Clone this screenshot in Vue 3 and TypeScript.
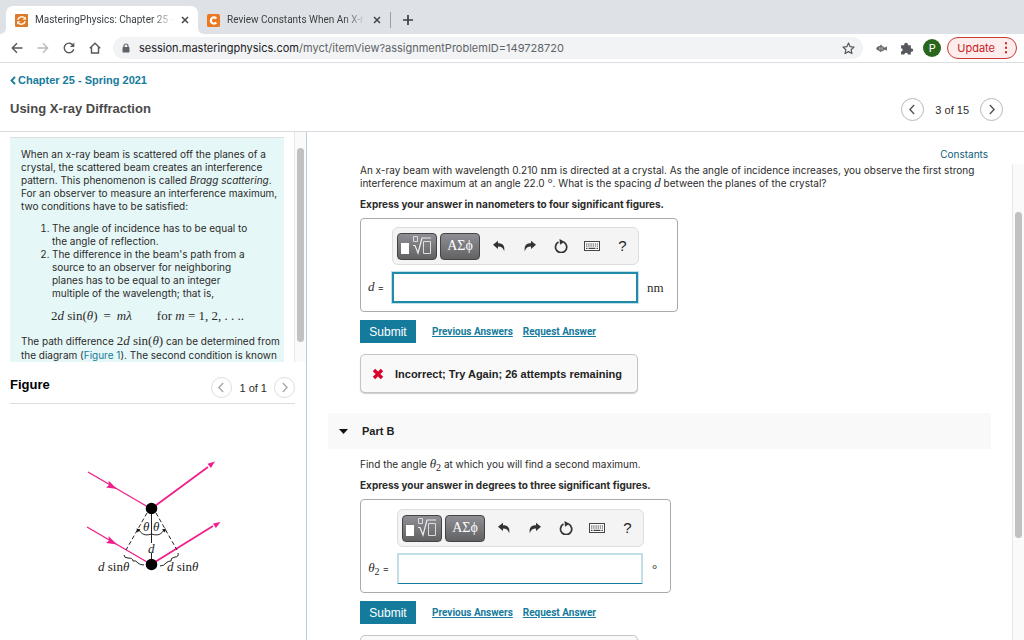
<script setup lang="ts">
import { ref } from 'vue'

interface Part {
  id: string
  symbol: string
  sub: string
  unit: string
  unitName: string
  instruction: string
}

const partA: Part = {
  id: 'a', symbol: 'd', sub: '', unit: 'nm', unitName: 'nanometers',
  instruction: 'Express your answer in nanometers to four significant figures.',
}
const partB: Part = {
  id: 'b', symbol: 'θ', sub: '2', unit: '°', unitName: 'degrees',
  instruction: 'Express your answer in degrees to three significant figures.',
}
const parts: Part[] = [partA, partB]
const answers = ref<Record<string, string>>({ a: '', b: '' })
const address = 'session.masteringphysics.com'
const addressPath = '/myct/itemView?assignmentProblemID=149728720'
</script>

<template>
  <div class="window">
    <nav class="tabs" aria-label="Browser tabs">
      <div class="tab active">
        <svg class="fav" viewBox="0 0 14 14" aria-hidden="true">
          <rect width="14" height="14" rx="1" fill="#dc7a2b" />
          <path d="M3 6.2a4.3 4.3 0 0 1 7.3-1.8M11 7.8a4.3 4.3 0 0 1-7.3 1.8" fill="none" stroke="#fff3df" stroke-width="1.7" />
          <path d="M11.8 2.6v3.6H8zM2.2 11.4V7.8H6z" fill="#fff3df" />
        </svg>
        <span class="tab-title">MasteringPhysics: Chapter 25 -</span>
        <button class="close" aria-label="Close tab"><svg viewBox="0 0 8 8"><path d="M1 1l6 6M7 1L1 7" stroke="#44474a" stroke-width="1.5" /></svg></button>
      </div>
      <div class="tab">
        <svg class="fav" viewBox="0 0 14 14" aria-hidden="true">
          <rect width="14" height="14" rx="2" fill="#eb7923" />
          <path d="M10 4.9a3.3 3.3 0 1 0 0 4.2" fill="none" stroke="#fff" stroke-width="2.4" />
        </svg>
        <span class="tab-title">Review Constants When An X-r</span>
        <button class="close" aria-label="Close tab"><svg viewBox="0 0 8 8"><path d="M1 1l6 6M7 1L1 7" stroke="#44474a" stroke-width="1.5" /></svg></button>
      </div>
      <button class="new-tab" aria-label="New tab"><svg viewBox="0 0 10 10"><path d="M5 0v10M0 5h10" stroke="#3c4043" stroke-width="1.7" /></svg></button>
    </nav>

    <div class="toolbar">
      <button class="nav-btn" aria-label="Back"><svg viewBox="0 0 12 12"><path d="M11.5 6H1.5M6 1.3L1.3 6 6 10.7" fill="none" stroke="#55585c" stroke-width="1.4" /></svg></button>
      <button class="nav-btn" aria-label="Forward"><svg viewBox="0 0 12 12"><path d="M.5 6h10M6 1.3L10.7 6 6 10.7" fill="none" stroke="#b9bbbe" stroke-width="1.4" /></svg></button>
      <button class="nav-btn" aria-label="Reload"><svg viewBox="0 0 12 12"><path d="M10.3 3.7A4.8 4.8 0 1 0 10.7 7.2" fill="none" stroke="#55585c" stroke-width="1.4" /><path d="M11.3.6v4.3H7z" fill="#55585c" /></svg></button>
      <button class="nav-btn" aria-label="Home"><svg viewBox="0 0 12 12"><path d="M.8 6.2L6 1.2l5.2 5M2.5 5v6h7V5" fill="none" stroke="#55585c" stroke-width="1.4" /></svg></button>
      <div class="url">
        <svg class="lock" viewBox="0 0 8 10" aria-hidden="true"><path d="M2 4.5V3a2 2 0 0 1 4 0v1.5" fill="none" stroke="#5f6368" stroke-width="1.2" /><rect x=".5" y="4" width="7" height="5.5" rx=".8" fill="#5f6368" /></svg>
        <span class="url-text">{{ address }}<span class="path">{{ addressPath }}</span></span>
        <button class="star" aria-label="Bookmark"><svg viewBox="0 0 12 12"><path d="M6 1l1.5 3.3 3.6.4-2.7 2.4.8 3.6L6 8.9l-3.2 1.800.8-3.600L.9 4.700l3.600-.4z" fill="none" stroke="#55585c" stroke-width="1.1" stroke-linejoin="round" /></svg></button>
      </div>
      <button class="ext" aria-label="Extension"><svg viewBox="0 0 12 12"><path d="M1 6c1-1.7 2.5-2.2 3.5-2.2L5.5 2.300l1.3 1.600c1 .3 1.5.8 2 1.300l2.200-1.200v4L8.800 6.900c-1 1.300-2 1.700-3 1.700L5 9.500 4.200 8.400C3 8.200 1.800 7.300 1 6z" fill="#66696d" /><path d="M4.500 4.800v2.500M6.500 4.800v2.500" stroke="#ddd" stroke-width=".8" /></svg></button>
      <button class="ext" aria-label="Extensions"><svg viewBox="0 0 12 12"><path d="M1 3h3a1.7 1.7 0 1 1 3.200 0H10v3a1.600 1.600 0 1 1 0 3v2.500H7.300a1.600 1.600 0 0 0-3.200 0H1V8.700a1.500 1.500 0 0 0 0-3z" fill="#55585c" /></svg></button>
      <button class="avatar" aria-label="Profile">P</button>
      <button class="update">Update<svg viewBox="0 0 4 12" aria-hidden="true"><g fill="#c5221f"><rect x="1" y="0" width="2" height="2.4" rx="1" /><rect x="1" y="4.5" width="2" height="2.4" rx="1" /><rect x="1" y="9" width="2" height="2.4" rx="1" /></g></svg></button>
    </div>

    <header class="head">
      <div>
        <a class="back" href="#"><svg viewBox="0 0 6 9" aria-hidden="true"><path d="M5 .8L1.5 4.5 5 8.2" fill="none" stroke="#147b9c" stroke-width="1.9" /></svg>Chapter 25 - Spring 2021</a>
        <h1>Using X-ray Diffraction</h1>
      </div>
      <div class="pager">
        <button class="round" aria-label="Previous item"><svg viewBox="0 0 10 10"><path d="M6.5 1L2.7 5l3.8 4" fill="none" stroke="#555" stroke-width="1.3" /></svg></button>
        <span>3 of 15</span>
        <button class="round" aria-label="Next item"><svg viewBox="0 0 10 10"><path d="M3.5 1l3.8 4-3.8 4" fill="none" stroke="#555" stroke-width="1.3" /></svg></button>
      </div>
    </header>

    <main class="main">
      <aside class="side">
        <div class="passage-row">
          <section class="passage">
            <p>When an x-ray beam is scattered off the planes of a<br>crystal, the scattered beam creates an interference<br>pattern. This phenomenon is called <em>Bragg scattering</em>.<br>For an observer to measure an interference maximum,<br>two conditions have to be satisfied:</p>
            <ol>
              <li>The angle of incidence has to be equal to<br>the angle of reflection.</li>
              <li>The difference in the beam's path from a<br>source to an observer for neighboring<br>planes has to be equal to an integer<br>multiple of the wavelength; that is,</li>
            </ol>
            <div class="formula math"><span>2<i>d</i> sin(<i>θ</i>)<span class="eq">=</span><i>mλ</i></span><span>for <i>m</i> = 1, 2, . . ..</span></div>
            <p class="loose">The path difference <span class="math">2<i>d</i> sin(<i>θ</i>)</span> can be determined from<br>the diagram (<a href="#figure">Figure 1</a>). The second condition is known</p>
          </section>
          <div class="track"><div class="thumb"></div></div>
        </div>
        <section id="figure" class="figure">
          <div class="figure-head">
            <h2>Figure</h2>
            <div class="pager small">
              <button class="round" aria-label="Previous figure"><svg viewBox="0 0 10 10"><path d="M6.5 1L2.7 5l3.8 4" fill="none" stroke="#aaa" stroke-width="1.3" /></svg></button>
              <span>1 of 1</span>
              <button class="round" aria-label="Next figure"><svg viewBox="0 0 10 10"><path d="M3.5 1l3.8 4-3.8 4" fill="none" stroke="#aaa" stroke-width="1.3" /></svg></button>
            </div>
          </div>
          <svg class="diagram" viewBox="80 454 150 126" role="img" aria-label="Rays scattered from two planes">
            <g fill="none" stroke="#f0208a" stroke-width="1.4">
              <path d="M88 472l60 35M87 527l60 35" />
              <path d="M155 506l53-39M155 562l58-36" stroke-width="1.8" />
            </g>
            <g fill="#f0208a">
              <path d="M117 489l-11-1.500 3-2.500-.5-4.500zM117 544.500l-11-1.500 3-2.500-.5-4.500zM215 461.500l-7.500 2.200 3.400 4.400zM220.500 522l-7.500 1.500 2.900 4.500z" />
            </g>
            <g fill="none" stroke="#222">
              <path d="M147 513l-21 37M156 513l21 37" stroke-dasharray="4 2.5" />
              <path d="M151.500 512v31M151.500 553v8M139 530c4 6.500 9 5 12.500 4M164 530c-4 6.500-9 5-12.500 4" />
              <path d="M124 555q0 3 4 3 5 0 5 3 3-1 5 2 2 2 6 2M160 566q4 0 6-3 2-2 5-2-1-3 4-4 4 0 3-4" />
            </g>
            <path d="M136.500 528.500l4 1-3 3zM166 528.500l-4 1 3 3z" fill="#111" />
            <circle cx="151.500" cy="508.500" r="5.800" /><circle cx="151.500" cy="564.500" r="5.800" />
            <g class="fig-text">
              <text x="143" y="531">θ</text><text x="153" y="531">θ</text>
              <text x="148" y="553">d</text>
              <text x="98" y="571">d <tspan class="up">sin</tspan>θ</text><text x="167" y="571">d <tspan class="up">sin</tspan>θ</text>
            </g>
          </svg>
        </section>
      </aside>

      <div class="content">
        <div class="body">
          <div class="constants"><a href="#">Constants</a></div>
          <template v-for="part in parts" :key="part.id">
            <p v-if="part.id === 'a'" class="problem">An x-ray beam with wavelength 0.210 <span class="math">nm</span> is directed at a crystal. As the angle of incidence increases, you observe the first strong<br>interference maximum at an angle 22.0 <span class="math">°</span>. What is the spacing <i class="math">d</i> between the planes of the crystal?</p>
            <template v-else>
              <button class="part-bar"><svg viewBox="0 0 9 5" aria-hidden="true"><path d="M0 0h9L4.500 5z" fill="#111" /></svg>Part B</button>
              <p class="problem">Find the angle <span class="math"><i>θ</i><sub>2</sub></span> at which you will find a second maximum.</p>
            </template>
            <p class="instruction">{{ part.instruction }}</p>
            <form class="answer" :class="'answer-' + part.id" @submit.prevent>
              <div class="tools">
                <button type="button" class="dark" aria-label="Templates"><svg class="root" viewBox="0 0 32 20" aria-hidden="true"><rect x="0" y="7" width="8" height="11" fill="#fff" /><path d="M12 9.500h2l3 7.500 4-15h9" fill="none" stroke="#eee" stroke-width="1.200" /><path d="M12.500 .5h4v5h-4zM22.500 5.500h7v12h-7z" fill="none" stroke="#ddd" /></svg></button>
                <button type="button" class="dark greek" aria-label="Symbols">ΑΣϕ</button>
                <button type="button" class="tool" aria-label="Undo"><svg viewBox="0 0 14 14"><path d="M1 5.800L6 1.700v2.500c5 0 7 2.500 6.200 8C11 9 9.500 7.600 6 7.600V10z" fill="#333" /></svg></button>
                <button type="button" class="tool" aria-label="Redo"><svg viewBox="0 0 14 14"><path d="M13 5.800L8 1.700v2.500c-5 0-7 2.500-6.200 8C3 9 4.500 7.600 8 7.600V10z" fill="#333" /></svg></button>
                <button type="button" class="tool" aria-label="Reset"><svg viewBox="0 0 14 14"><path d="M9.500 3a5.600 5.600 0 1 1-5 .1" fill="none" stroke="#333" stroke-width="1.700" /><path d="M5.500 0l5 2.800-4.500 3z" fill="#333" /></svg></button>
                <button type="button" class="tool" aria-label="Keyboard shortcuts"><svg class="keys" viewBox="0 0 16 10"><rect x=".5" y=".5" width="15" height="9" fill="#fff" stroke="#444" /><path d="M2 3h12M2 5h12" stroke="#444" stroke-width="1.200" stroke-dasharray="1.400 .8" /><path d="M2 7.300h1.500M4.500 7.300h7M12.500 7.300H14" stroke="#444" stroke-width="1.200" /></svg></button>
                <button type="button" class="tool help" aria-label="Help">?</button>
              </div>
              <label :for="'answer-' + part.id"><span class="math"><i>{{ part.symbol }}</i><sub v-if="part.sub">{{ part.sub }}</sub></span> =</label>
              <input :id="'answer-' + part.id" v-model="answers[part.id]" type="text">
              <span class="unit math" :title="part.unitName">{{ part.unit }}</span>
            </form>
            <div class="actions">
              <button class="submit">Submit</button>
              <a href="#">Previous Answers</a>
              <a href="#">Request Answer</a>
            </div>
            <div class="feedback">
              <template v-if="part.id === 'a'"><svg viewBox="0 0 12 12" aria-hidden="true"><path d="M2 2l8 8M10 2l-8 8" stroke="#d9002b" stroke-width="3.400" /></svg>Incorrect; Try Again; 26 attempts remaining</template>
            </div>
          </template>
        </div>
        <div class="track right"><div class="thumb"></div></div>
      </div>
    </main>
  </div>
</template>

<style>
body { margin: 0; background: #fff; }
</style>

<style scoped>
* { box-sizing: border-box; }
.window { height: 100vh; display: flex; flex-direction: column; overflow: hidden; font: 10px/13px Inter, "Liberation Sans", Arial, sans-serif; color: #2b2b2b; white-space: nowrap; }
button { font: inherit; color: inherit; padding: 0; border: 0; background: none; display: flex; align-items: center; justify-content: center; flex: none; }
svg { display: block; flex: none; }
p, h1, h2, ol { margin: 0; }
a { color: #147b9c; text-decoration: none; }
.math { font-family: "Liberation Serif", "Times New Roman", serif; font-size: 13px; line-height: 12px; }
.math sub { font-size: 10px; line-height: 0; vertical-align: -3px; }

.tabs { height: 34px; flex: none; background: #dee1e6; display: flex; align-items: flex-end; padding-left: 6px; font: 10px/14px Roboto, sans-serif; color: #3c4043; }
.tab { width: 192px; height: 28px; padding: 0 9px; display: flex; align-items: center; gap: 7px; position: relative; }
.tab.active { background: #fff; border-radius: 7px 7px 0 0; }
.tab.active::before, .tab.active::after { content: ""; position: absolute; bottom: 0; width: 6px; height: 6px; }
.tab.active::before { left: -6px; background: radial-gradient(circle at 0 0, #dee1e6 6px, #fff 6px); }
.tab.active::after { right: -6px; background: radial-gradient(circle at 100% 0, #dee1e6 6px, #fff 6px); }
.fav { width: 13px; height: 13px; }
.tab-title { flex: 1; min-width: 0; overflow: hidden; mask-image: linear-gradient(to right, #000 calc(100% - 22px), transparent); }
.close { width: 8px; height: 14px; }
.close svg { width: 8px; height: 8px; }
.new-tab { width: 34px; height: 16px; margin-bottom: 6px; border-left: 1px solid #9a9da1; }
.new-tab svg { width: 10px; height: 10px; }

.toolbar { height: 29px; flex: none; border-bottom: 1px solid #dcdee1; display: flex; align-items: center; padding: 0 7px 0 11px; font: 11px/14px Inter, sans-serif; }
.nav-btn { width: 12px; height: 22px; margin-right: 14px; }
.nav-btn svg { width: 12px; height: 12px; }
.nav-btn:nth-child(4) { margin-right: 12px; }
.url { flex: 1; height: 22px; border-radius: 11px; background: #f1f3f4; display: flex; align-items: center; padding: 0 8px 0 9px; color: #202124; }
.lock { width: 8px; height: 10px; margin-right: 9px; }
.url-text { flex: 1; }
.path { color: #5f6368; }
.star svg, .ext svg { width: 13px; height: 13px; }
.ext { margin-left: 12px; }
.avatar { width: 18px; height: 18px; border-radius: 50%; background: #2b661d; color: #fff; margin: 0 6px 0 10px; }
.update { height: 22px; border: 1px solid #c93a35; border-radius: 11px; background: #fcecec; color: #c5221f; padding: 0 8px 0 9px; gap: 9px; }
.update svg { width: 4px; height: 12px; }

.head { height: 69px; flex: none; border-bottom: 1px solid #d9dbde; padding: 10px 21px 0 10px; display: flex; justify-content: space-between; }
.back { display: flex; align-items: center; gap: 2px; font: bold 11px/14px "Liberation Sans", Arial, sans-serif; }
.back svg { width: 6px; height: 9px; }
h1 { font: bold 13px/16px "Liberation Sans", Arial, sans-serif; margin-top: 14px; color: #4a4a4a; }
.pager { display: flex; align-items: center; gap: 11px; font: 11px/14px "Liberation Sans", Arial, sans-serif; }
.head .pager { height: 23px; margin-top: 25px; }
.round { width: 23px; height: 23px; border: 1px solid #b8b8b8; border-radius: 50%; background: #fff; }
.round svg { width: 11px; height: 11px; }

.main { flex: 1; min-height: 0; display: flex; }
.side { width: 307px; flex: none; border-right: 1px solid #b9cce0; display: flex; flex-direction: column; }
.passage-row { height: 230px; flex: none; display: flex; padding-left: 10px; gap: 10px; }
.passage { flex: 1; margin-top: 5px; background: #e6f7f7; border-top: 1px solid #d9e0e0; padding: 10px 0 0 11px; overflow: hidden; }
ol { margin: 9px 0 0; padding-left: 31px; }
.formula { display: flex; gap: 25px; padding-left: 30px; margin-top: 8px; line-height: 16px; }
.eq { margin: 0 6px; }
.loose { margin-top: 10px; line-height: 14px; }
.track { width: 12px; flex: none; background: #fafafa; border-left: 1px solid #e8e8e8; padding: 16px 2px 0; }
.thumb { height: 194px; border-radius: 4px; background: #c1c1c1; }
.figure { flex: 1; padding: 15px 11px 0 10px; }
.figure-head { display: flex; justify-content: space-between; height: 27px; border-bottom: 1px solid #ddd; }
h2 { font: bold 13px/16px "Liberation Sans", Arial, sans-serif; color: #000; }
.small { height: 21px; gap: 7px; }
.small .round { width: 21px; height: 21px; border-color: #ddd; }
.diagram { width: 150px; height: 126px; margin: 50px 0 0 70px; }
.fig-text { font: italic 13px "Liberation Serif", serif; fill: #222; }
.up { font-style: normal; }

.content { flex: 1; min-width: 0; display: flex; }
.body { flex: 1; min-width: 0; padding: 15px 21px 0 53px; overflow: hidden; }
.constants { text-align: right; line-height: 14px; padding-right: 3px; }
.constants a { color: #0d5d78; }
.problem { margin-top: 3px; }
.instruction { font-weight: bold; margin-top: 7px; line-height: 14px; }
.answer { width: fit-content; height: 94px; margin-top: 7px; border: 1px solid #aaa; border-radius: 4px; display: grid; align-items: center; }
.answer-a { grid-template: 38px 33px / 23px 247px 22px; gap: 6px 8px; padding: 8px 8px 0 0; }
.answer-b { grid-template: 38px 31px / 28px 247px 8px; gap: 6px 8px; padding: 9px 10px 0 0; }
.tools { grid-column: 2; height: 38px; border: 1px solid #ddd; border-radius: 6px; background: #f4f4f4; padding-left: 4px; display: flex; align-items: center; }
.dark { width: 40px; height: 27px; margin-right: 3px; border: 1px solid #444; border-radius: 4px; background: linear-gradient(#8e8e95, #626264); color: #fff; }
.root { width: 32px; height: 20px; }
.greek { font: 14px/18px "Liberation Serif", serif; }
.tool { width: 31px; height: 27px; }
.tool svg { width: 14px; height: 14px; }
.tool .keys { width: 16px; height: 10px; }
.help { font: 15px/18px "Liberation Sans", Arial, sans-serif; color: #222; }
.answer label { grid-column: 1; text-align: right; }
.answer input { width: 246px; height: 31px; border: 2px solid #218aa9; border-radius: 0; background: #fff; padding: 0 6px; font: inherit; outline: 1px solid #bfe0e8; outline-offset: 0; }
.answer-b input { border: 2px solid #c0dfe6; border-bottom: 1px solid #147b9c; outline: none; }
.actions { display: flex; align-items: center; margin-top: 8px; font: bold 10px/13px Roboto, sans-serif; }
.actions a { text-decoration: underline; margin-right: 10px; }
.submit { width: 56px; height: 23px; background: #147b9c; color: #fff; font: 12px/14px "Liberation Sans", Arial, sans-serif; margin-right: 16px; }
.feedback { width: 278px; height: 39px; margin-top: 11px; border: 1px solid #c4c4c4; border-radius: 5px; box-shadow: 0 1px 1px #ccc; background: #f9f9f9; display: flex; align-items: center; gap: 11px; padding-left: 11px; font: bold 11px/14px "Liberation Sans", Arial, sans-serif; color: #222; }
.feedback svg { width: 12px; height: 12px; }
.part-bar { width: calc(100% + 32px); height: 36px; margin: 20px 0 9px -32px; background: #f9f9f9; justify-content: flex-start; padding-left: 11px; gap: 14px; font: bold 11px/14px "Liberation Sans", Arial, sans-serif; color: #222; }
.part-bar svg { width: 9px; height: 5px; }
.right { margin-top: 32px; padding-top: 48px; }
.right .thumb { height: 326px; }
</style>
